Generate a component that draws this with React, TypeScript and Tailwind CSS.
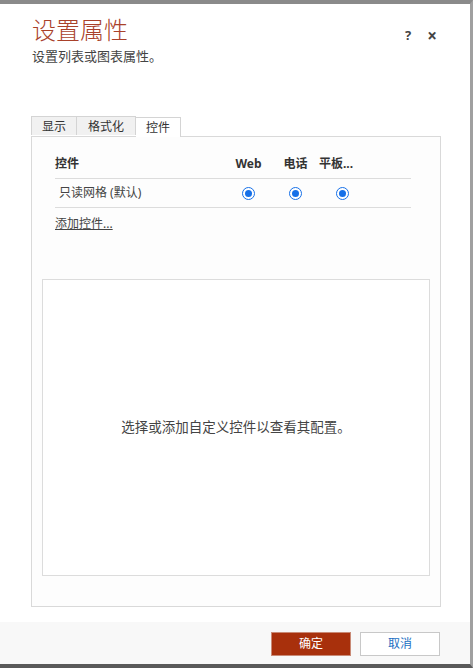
import { useState } from "react";

const font = { fontFamily: "'Noto Sans', 'Noto Sans CJK SC', sans-serif" };

function Radio({ on }: { on: boolean }) {
  return (
    <span className="w-[13px] h-[13px] rounded-full border border-[#1670e8] bg-white flex items-center justify-center">
      {on && <span className="w-[7px] h-[7px] rounded-full bg-[#1670e8]" />}
    </span>
  );
}

export default function App() {
  const [tab, setTab] = useState(2);
  const tabs = [
    { t: "显示", pad: "px-[10px] border-l" },
    { t: "格式化", pad: "px-[11px]" },
    { t: "控件", pad: "px-[10px]" },
  ];

  return (
    <div
      className="w-[473px] h-[668px] bg-white flex flex-col border-t-4 border-t-[#8a8a8a] border-r-[3px] border-r-[#a0a0a0] border-b-4 border-b-[#5a5a5a] text-[#333]"
      style={font}
    >
      {/* header */}
      <div className="h-[112px] shrink-0 pl-[32px] pr-[33px] pt-[10px] flex justify-between">
        <div>
          <h1 className="text-[24px] leading-[32px] font-light text-[#a9412a]">设置属性</h1>
          <p className="text-[13px] leading-[18px] text-[#444] mt-[1px]">设置列表或图表属性。</p>
        </div>
        <div className="flex items-center gap-[16px] h-[38px] pt-[4px] text-[#444]">
          <button className="text-[13px] font-bold leading-none">?</button>
          <button className="text-[17px] font-bold leading-none">×</button>
        </div>
      </div>

      {/* tabs */}
      <div className="flex pl-[31px] h-[20px] shrink-0 text-[12px] leading-[19px]">
        {tabs.map((x, i) => (
          <button
            key={x.t}
            onClick={() => setTab(i)}
            className={
              "border-t border-r border-[#d4d4d4] " +
              x.pad +
              " " +
              (tab === i ? "bg-white relative top-[1px] h-[20px]" : "bg-[#f1f1f1] h-[19px]")
            }
          >
            {x.t}
          </button>
        ))}
      </div>

      {/* panel */}
      <div className="mx-[31px] w-[410px] h-[471px] shrink-0 border border-[#d9d9d9] bg-[#fdfdfd] flex flex-col">
        <div className="pl-[23px] pr-[29px] pt-[12px] text-[12px]">
          <div className="flex items-center h-[30px] border-b border-[#dcdcdc] font-bold text-[#333]">
            <span className="w-[170px]">控件</span>
            <span className="w-[47px] text-center">Web</span>
            <span className="w-[47px] text-center">电话</span>
            <span className="w-[47px] text-left">平板...</span>
          </div>
          <div className="flex items-center h-[29px] border-b border-[#dcdcdc]">
            <span className="w-[170px] pl-[4px] text-[#444]">只读网格 (默认)</span>
            <span className="w-[47px] flex justify-center"><Radio on /></span>
            <span className="w-[47px] flex justify-center"><Radio on /></span>
            <span className="w-[47px] flex justify-center"><Radio on /></span>
          </div>
          <a className="inline-block mt-[7px] leading-[18px] underline text-[#444] cursor-pointer">添加控件...</a>
        </div>
        <div className="mt-[46px] mx-[10px] h-[297px] border border-[#dcdcdc] bg-white flex items-center justify-center">
          <span className="text-[13.5px] text-[#444]">选择或添加自定义控件以查看其配置。</span>
        </div>
      </div>

      <div className="h-[15px] shrink-0" />

      {/* footer */}
      <div className="flex-1 bg-[#f8f8f8] flex items-start justify-end gap-[9px] pr-[30px] pt-[10px]">
        <button className="w-[80px] h-[24px] bg-[#a8300c] border border-[#c98a76] text-white text-[12px]">确定</button>
        <button className="w-[80px] h-[24px] bg-white border border-[#c8c8c8] text-[#1b6fc2] text-[12px]">取消</button>
      </div>
    </div>
  );
}
